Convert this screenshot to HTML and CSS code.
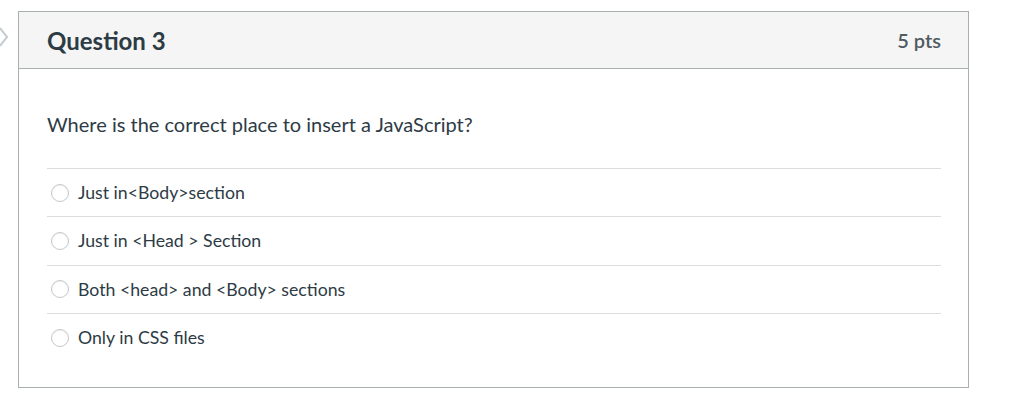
FILE: index.html
```html
<!DOCTYPE html>
<html>
<head>
<meta charset="utf-8">
<link rel="stylesheet" href="styles.css">
</head>
<body>
<div class="page">
  <div class="nav-arrow">
    <svg width="10" height="22" viewBox="0 0 10 22"><polyline points="0,2 7,11 0,20" fill="none" stroke="#c3cbd1" stroke-width="2"/></svg>
  </div>
  <div class="question">
    <div class="q-header">
      <h2 class="q-title">Question 3</h2>
      <span class="q-points">5 pts</span>
    </div>
    <div class="q-body">
      <p class="q-text">Where is the correct place to insert a JavaScript?</p>
      <div class="answers">
        <label class="answer"><span class="radio"></span><span class="answer-text">Just in&lt;Body&gt;section</span></label>
        <label class="answer"><span class="radio"></span><span class="answer-text">Just in &lt;Head &gt; Section</span></label>
        <label class="answer"><span class="radio"></span><span class="answer-text">Both &lt;head&gt; and &lt;Body&gt; sections</span></label>
        <label class="answer"><span class="radio"></span><span class="answer-text">Only in CSS files</span></label>
      </div>
    </div>
  </div>
</div>
</body>
</html>
```
FILE: styles.css
```css
html, body {
  margin: 0;
  padding: 0;
  background: #ffffff;
}
body {
  font-family: Lato, "Liberation Sans", sans-serif;
  color: #2d3b45;
}
.page {
  position: relative;
  padding: 11px 0 0 18px;
}
.nav-arrow {
  position: absolute;
  left: 0;
  top: 26px;
}
.question {
  width: 949px;
  border: 1px solid #a9aeb1;
  background: #fff;
}
.q-header {
  height: 56px;
  background: #f5f5f5;
  border-bottom: 1px solid #a9aeb1;
  display: flex;
  align-items: center;
  justify-content: space-between;
  padding: 0 27px 0 28px;
}
.q-title {
  margin: 0;
  font-size: 24px;
  font-weight: 700;
  color: #2d3b45;
}
.q-points {
  font-size: 20px;
  font-weight: 600;
  color: #4f5a61;
}
.q-body {
  padding: 43px 27px 26px 28px;
}
.q-text {
  margin: 0 0 31px;
  font-size: 20px;
  line-height: 25px;
}
.answer {
  display: flex;
  align-items: center;
  height: 47.33px;
  border-top: 1px solid #dadcde;
}
.radio {
  width: 16px;
  height: 16px;
  border: 1px solid #c4c8cb;
  border-radius: 50%;
  margin: 0 9px 0 4px;
  box-shadow: inset 0 1px 1px rgba(0,0,0,0.06);
  background: #fff;
}
.answer-text {
  font-size: 17.7px;
  color: #2d3b45;
}
```
